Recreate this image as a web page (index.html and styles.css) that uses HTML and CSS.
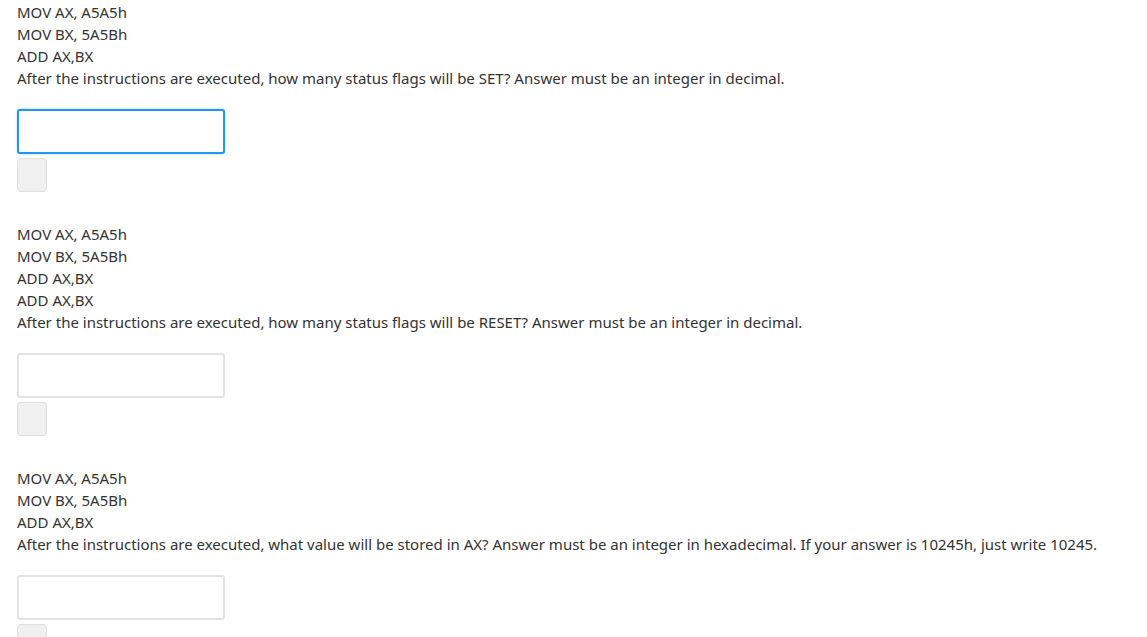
FILE: index.html
```html
<!DOCTYPE html>
<html>
<head>
<meta charset="utf-8">
<link rel="stylesheet" href="styles.css">
</head>
<body>
<div class="page">
  <div class="question">
    <div class="prompt">
      <div>MOV AX, A5A5h</div>
      <div>MOV BX, 5A5Bh</div>
      <div>ADD AX,BX</div>
      <div>After the instructions are executed, how many status flags will be SET? Answer must be an integer in decimal.</div>
    </div>
    <input class="answer focused" type="text">
    <button class="submit" type="button"></button>
  </div>
  <div class="question">
    <div class="prompt">
      <div>MOV AX, A5A5h</div>
      <div>MOV BX, 5A5Bh</div>
      <div>ADD AX,BX</div>
      <div>ADD AX,BX</div>
      <div>After the instructions are executed, how many status flags will be RESET? Answer must be an integer in decimal.</div>
    </div>
    <input class="answer" type="text">
    <button class="submit" type="button"></button>
  </div>
  <div class="question">
    <div class="prompt">
      <div>MOV AX, A5A5h</div>
      <div>MOV BX, 5A5Bh</div>
      <div>ADD AX,BX</div>
      <div>After the instructions are executed, what value will be stored in AX? Answer must be an integer in hexadecimal. If your answer is 10245h, just write 10245.</div>
    </div>
    <input class="answer" type="text">
    <button class="submit" type="button"></button>
  </div>
</div>
</body>
</html>
```

FILE: styles.css
```css
html, body {
  margin: 0;
  padding: 0;
  background: #fff;
}
.page {
  padding: 1px 0 0 17px;
  font-family: "Segoe UI", "Noto Sans", "Open Sans", sans-serif;
  font-size: 15px;
  line-height: 22px;
  color: #333;
}
.question {
  display: flex;
  flex-direction: column;
  align-items: flex-start;
  margin-bottom: 31px;
}
.prompt {
  margin-bottom: 20px;
}
.answer {
  box-sizing: border-box;
  width: 208px;
  height: 45px;
  margin: 0;
  padding: 6px 10px;
  border: 2px solid #e2e2e2;
  border-radius: 3px;
  background: #fff;
  outline: none;
  font: inherit;
}
.answer.focused {
  border-color: #2196f3;
  box-shadow: 0 0 2px rgba(33, 150, 243, 0.5);
}
.submit {
  box-sizing: border-box;
  width: 30px;
  height: 34px;
  margin: 4px 0 0 0;
  padding: 0;
  border: 1px solid #e0e0e0;
  border-radius: 4px;
  background: #f0f0f0;
}
```
